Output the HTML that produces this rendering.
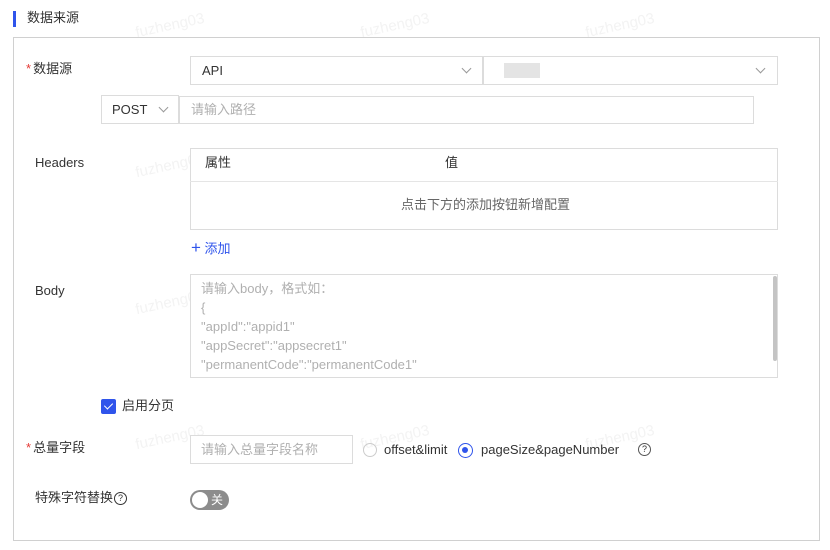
<!DOCTYPE html>
<html><head><meta charset="utf-8"><style>
*{box-sizing:border-box;margin:0;padding:0}
body{width:830px;height:550px;background:#fff;font-family:"Liberation Sans","Noto Sans CJK SC",sans-serif;font-size:13px;line-height:16px;color:#333;position:relative;overflow:hidden}
.a{position:absolute}
.box{border:1px solid #dcdcdc;background:#fff}
.ph{color:#b0b0b0}
.lab{font-size:13px;color:#333}
.req{color:#e53935;margin-right:2px}
.chev{position:absolute;width:7px;height:7px;border-right:1px solid #999;border-bottom:1px solid #999;transform:rotate(45deg)}
.wm{position:absolute;color:#f3f3f3;font-size:15px;transform:rotate(-12deg);white-space:nowrap}
</style></head><body>
<div class="a" style="left:13px;top:11px;width:3px;height:16px;background:#2f54eb"></div>
<div class="a" style="left:27px;top:10px;font-size:13px">数据来源</div>
<div class="a" style="left:13px;top:37px;width:807px;height:504px;border:1px solid #d0d0d0"></div>

<div class="wm" style="left:135px;top:18px">fuzheng03</div>
<div class="wm" style="left:360px;top:18px">fuzheng03</div>
<div class="wm" style="left:585px;top:18px">fuzheng03</div>
<div class="wm" style="left:135px;top:158px">fuzheng03</div>
<div class="wm" style="left:360px;top:158px">fuzheng03</div>
<div class="wm" style="left:585px;top:158px">fuzheng03</div>
<div class="wm" style="left:135px;top:295px">fuzheng03</div>
<div class="wm" style="left:360px;top:295px">fuzheng03</div>
<div class="wm" style="left:585px;top:295px">fuzheng03</div>
<div class="wm" style="left:135px;top:430px">fuzheng03</div>
<div class="wm" style="left:360px;top:430px">fuzheng03</div>
<div class="wm" style="left:585px;top:430px">fuzheng03</div>

<div class="a lab" style="left:26px;top:61px"><span class="req">*</span>数据源</div>
<div class="a box" style="left:190px;top:56px;width:293px;height:29px"><span class="a" style="left:11px;top:6px">API</span><div class="chev" style="left:272px;top:8px"></div></div>
<div class="a box" style="left:483px;top:56px;width:295px;height:29px"><div class="a" style="left:20px;top:6px;width:36px;height:15px;background:#ddd;opacity:.8"></div><div class="chev" style="left:273px;top:8px"></div></div>

<div class="a box" style="left:101px;top:95px;width:78px;height:29px"><span class="a" style="left:10px;top:6px">POST</span><div class="chev" style="left:58px;top:8px"></div></div>
<div class="a box" style="left:179px;top:96px;width:575px;height:28px"><span class="a ph" style="left:11px;top:5px">请输入路径</span></div>

<div class="a lab" style="left:35px;top:155px">Headers</div>
<div class="a box" style="left:190px;top:148px;width:588px;height:82px"></div>
<div class="a" style="left:190px;top:181px;width:588px;height:1px;background:#e5e5e5"></div>
<div class="a" style="left:205px;top:155px">属性</div>
<div class="a" style="left:445px;top:155px">值</div>
<div class="a" style="left:401px;top:197px;color:#666">点击下方的添加按钮新增配置</div>
<div class="a" style="left:191px;top:240px;color:#2f54eb"><span style="font-size:17px">+</span>&nbsp;添加</div>

<div class="a lab" style="left:35px;top:283px">Body</div>
<div class="a box" style="left:190px;top:274px;width:588px;height:104px;overflow:hidden">
<div class="a" style="left:10px;top:4px;color:#b0b0b0;line-height:19px;font-size:13px">请输入body，格式如：<br>{<br>"appId":"appid1"<br>"appSecret":"appsecret1"<br>"permanentCode":"permanentCode1"<br>}</div>
<div class="a" style="left:582px;top:1px;width:4px;height:85px;background:#c4c4c4;border-radius:2px"></div>
</div>

<div class="a" style="left:101px;top:399px;width:15px;height:15px;background:#2f54eb;border-radius:2px"><div class="a" style="left:5px;top:2px;width:5px;height:8px;border-right:1.5px solid #fff;border-bottom:1.5px solid #fff;transform:rotate(45deg)"></div></div>
<div class="a" style="left:122px;top:398px">启用分页</div>

<div class="a lab" style="left:26px;top:440px"><span class="req">*</span>总量字段</div>
<div class="a box" style="left:190px;top:435px;width:163px;height:29px"><span class="a ph" style="left:10px;top:6px">请输入总量字段名称</span></div>
<div class="a" style="left:363px;top:443px;width:14px;height:14px;border:1px solid #ccc;border-radius:50%"></div>
<div class="a" style="left:384px;top:442px">offset&amp;limit</div>
<div class="a" style="left:458px;top:443px;width:15px;height:15px;border:1.5px solid #2f54eb;border-radius:50%"><div class="a" style="left:3px;top:3px;width:6px;height:6px;background:#2f54eb;border-radius:50%"></div></div>
<div class="a" style="left:481px;top:442px">pageSize&amp;pageNumber</div>
<div class="a" style="left:638px;top:443px;width:13px;height:13px;border:1px solid #555;border-radius:50%;font-size:9px;text-align:center;line-height:11px">?</div>

<div class="a lab" style="left:35px;top:490px">特殊字符替换</div>
<div class="a" style="left:114px;top:492px;width:13px;height:13px;border:1px solid #333;border-radius:50%;font-size:9px;text-align:center;line-height:11px">?</div>
<div class="a" style="left:190px;top:490px;width:39px;height:20px;background:#8c8c8c;border-radius:10px"><div class="a" style="left:2px;top:2px;width:16px;height:16px;background:#fff;border-radius:50%"></div><span class="a" style="left:21px;top:2px;color:#fff;font-size:12px">关</span></div>
</body></html>
